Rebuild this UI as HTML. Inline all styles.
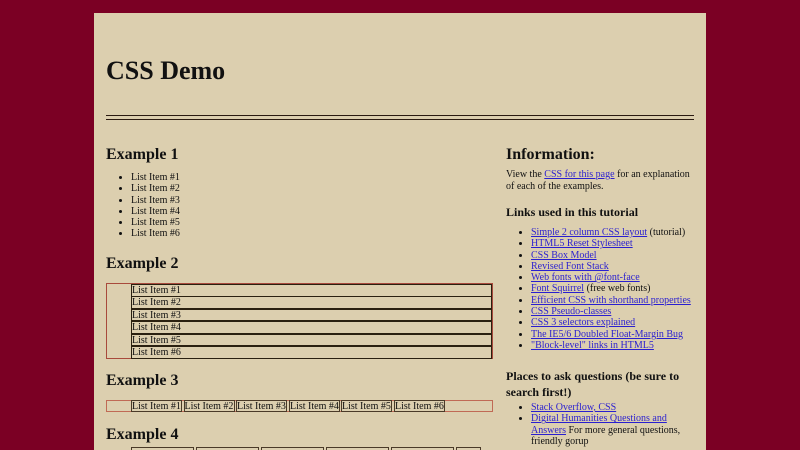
<!DOCTYPE html>
<html><head><style>
*{margin:0;padding:0}
body{background:#7b0024;width:800px;height:450px;overflow:hidden;font-family:"Liberation Serif",serif;font-size:10px;color:#111;position:relative}
#box{position:absolute;left:94px;top:13px;width:612px;height:437px;background:#dccfaf;overflow:hidden}
.a{position:absolute;white-space:nowrap}
h1{font-size:26px;font-weight:bold}
h2{font-size:16px;font-weight:bold}
h3{font-size:12px;font-weight:bold;line-height:16px}
.hr{position:absolute;left:12px;width:588px;height:1px;background:#2a1a10}
ul.l{list-style:disc;line-height:11.3px}
a{color:#2a1fd0;text-decoration:underline}
.e2{position:absolute;left:12px;top:270px;width:385px;height:74px;border:1px solid #a84a3c}
.e2 div{position:absolute;left:24px;width:359px;height:10.5px;border:1px solid #2a2010;line-height:11px}
.e3{position:absolute;left:12px;top:387px;width:385px;height:10px;border:1px solid #c06a55}
.e3 span{position:absolute;top:-1px;width:49px;height:10px;border:1px solid #4a3a28;line-height:11px;white-space:nowrap}
.e4 div{position:absolute;top:434px;width:61px;height:20px;border:1px solid #4a3a28}
</style></head><body>
<div id="box">
<h1 class="a" style="left:12px;top:43px">CSS Demo</h1>
<div class="hr" style="top:102px"></div>
<div class="hr" style="top:106px"></div>
<h2 class="a" style="left:12px;top:133px">Example 1</h2>
<ul class="l a" style="left:37px;top:159px"><li>List Item #1</li><li>List Item #2</li><li>List Item #3</li><li>List Item #4</li><li>List Item #5</li><li>List Item #6</li></ul>
<h2 class="a" style="left:12px;top:242px">Example 2</h2>
<div class="e2">
<div style="top:0">List Item #1</div><div style="top:12.4px">List Item #2</div><div style="top:24.8px">List Item #3</div><div style="top:37.2px">List Item #4</div><div style="top:49.6px">List Item #5</div><div style="top:62px">List Item #6</div>
</div>
<h2 class="a" style="left:12px;top:359px">Example 3</h2>
<div class="e3">
<span style="left:24px">List Item #1</span><span style="left:76.5px">List Item #2</span><span style="left:129px">List Item #3</span><span style="left:182px">List Item #4</span><span style="left:234px">List Item #5</span><span style="left:287px">List Item #6</span>
</div>
<h2 class="a" style="left:12px;top:413px">Example 4</h2>
<div class="e4"><div style="left:37px"></div><div style="left:102px"></div><div style="left:167px"></div><div style="left:232px"></div><div style="left:297px"></div><div style="left:362px;width:23px"></div></div>

<h2 class="a" style="left:412px;top:133px">Information:</h2>
<div class="a" style="left:412px;top:156px;line-height:11.5px">View the <a>CSS for this page</a> for an explanation<br>of each of the examples.</div>
<h3 class="a" style="left:412px;top:191px">Links used in this tutorial</h3>
<ul class="l a" style="left:437px;top:214px"><li><a>Simple 2 column CSS layout</a> (tutorial)</li><li><a>HTML5 Reset Stylesheet</a></li><li><a>CSS Box Model</a></li><li><a>Revised Font Stack</a></li><li><a>Web fonts with @font-face</a></li><li><a>Font Squirrel</a> (free web fonts)</li><li><a>Efficient CSS with shorthand properties</a></li><li><a>CSS Pseudo-classes</a></li><li><a>CSS 3 selectors explained</a></li><li><a>The IE5/6 Doubled Float-Margin Bug</a></li><li><a>"Block-level" links in HTML5</a></li></ul>
<h3 class="a" style="left:412px;top:355px">Places to ask questions (be sure to<br>search first!)</h3>
<ul class="l a" style="left:437px;top:389px"><li><a>Stack Overflow, CSS</a></li><li><a>Digital Humanities Questions and</a><br><a>Answers</a> For more general questions,<br>friendly gorup</li></ul>
</div>
</body></html>
